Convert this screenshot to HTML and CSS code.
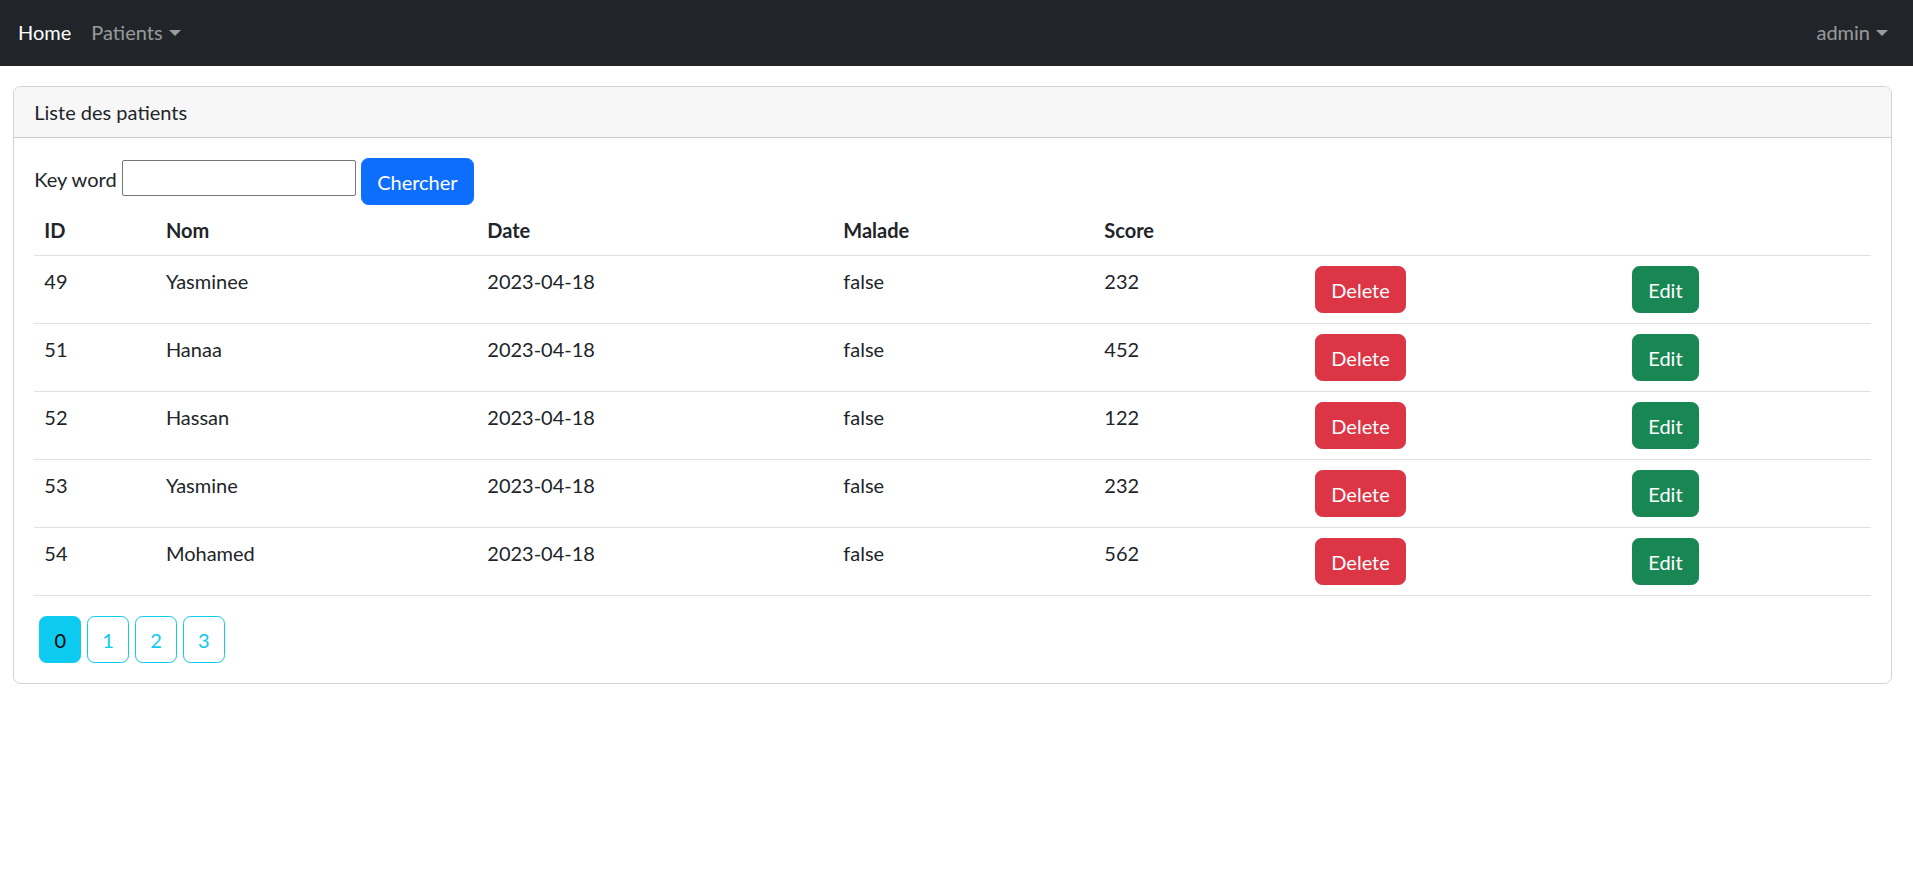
FILE: index.html
```html
<!DOCTYPE html>
<html lang="fr">
<head>
<meta charset="utf-8">
<title>Patients</title>
<link rel="stylesheet" href="styles.css">
</head>
<body>
<nav class="navbar">
  <ul class="nav-left">
    <li><a class="nav-link active" href="#">Home</a></li>
    <li><a class="nav-link dropdown-toggle" href="#">Patients</a></li>
  </ul>
  <ul class="nav-right">
    <li><a class="nav-link dropdown-toggle" href="#">admin</a></li>
  </ul>
</nav>
<main class="page">
  <section class="card">
    <div class="card-header">Liste des patients</div>
    <div class="card-body">
      <form class="search">
        <label for="kw" class="kw-label">Key word</label>
        <input id="kw" type="text" class="kw">
        <button type="button" class="btn btn-primary">Chercher</button>
      </form>
      <table class="table">
        <colgroup>
          <col class="c-id"><col class="c-nom"><col class="c-date"><col class="c-malade"><col class="c-score"><col class="c-del"><col class="c-edit">
        </colgroup>
        <thead>
          <tr><th>ID</th><th>Nom</th><th>Date</th><th>Malade</th><th>Score</th><th></th><th></th></tr>
        </thead>
        <tbody>
          <tr><td>49</td><td>Yasminee</td><td>2023-04-18</td><td>false</td><td>232</td><td><button class="btn btn-danger">Delete</button></td><td><button class="btn btn-success">Edit</button></td></tr>
          <tr><td>51</td><td>Hanaa</td><td>2023-04-18</td><td>false</td><td>452</td><td><button class="btn btn-danger">Delete</button></td><td><button class="btn btn-success">Edit</button></td></tr>
          <tr><td>52</td><td>Hassan</td><td>2023-04-18</td><td>false</td><td>122</td><td><button class="btn btn-danger">Delete</button></td><td><button class="btn btn-success">Edit</button></td></tr>
          <tr><td>53</td><td>Yasmine</td><td>2023-04-18</td><td>false</td><td>232</td><td><button class="btn btn-danger">Delete</button></td><td><button class="btn btn-success">Edit</button></td></tr>
          <tr><td>54</td><td>Mohamed</td><td>2023-04-18</td><td>false</td><td>562</td><td><button class="btn btn-danger">Delete</button></td><td><button class="btn btn-success">Edit</button></td></tr>
        </tbody>
      </table>
      <ul class="pages">
        <li><a class="btn page-btn current" href="#">0</a></li>
        <li><a class="btn page-btn" href="#">1</a></li>
        <li><a class="btn page-btn" href="#">2</a></li>
        <li><a class="btn page-btn" href="#">3</a></li>
      </ul>
    </div>
  </section>
</main>
</body>
</html>
```
FILE: styles.css
```css
* { box-sizing: border-box; }
html, body { margin: 0; padding: 0; }
body {
  font-family: Lato, "Noto Sans", "Liberation Sans", sans-serif;
  font-size: 20px;
  line-height: 30px;
  color: #212529;
  background: #fff;
}
a { text-decoration: none; }
ul { list-style: none; margin: 0; padding: 0; }

.navbar {
  height: 66px;
  background: #212529;
  display: flex;
  align-items: center;
  justify-content: space-between;
  padding: 0 15px 2px 8px;
}
.navbar ul { display: flex; }
.nav-link {
  display: block;
  padding: 10px 10px;
  color: rgba(255,255,255,.55);
}
.nav-link.active { color: #fff; }
.dropdown-toggle::after {
  content: "";
  display: inline-block;
  margin-left: 6px;
  vertical-align: 4px;
  border-top: 6px solid;
  border-left: 6px solid transparent;
  border-right: 6px solid transparent;
}

.page { padding: 20px 20.7px 0 13.3px; }
.card {
  border: 1.25px solid rgba(0,0,0,.175);
  border-radius: 7.5px;
  overflow: hidden;
}
.card-header {
  background: #f7f7f7;
  padding: 10px 20px;
  border-bottom: 1.25px solid rgba(0,0,0,.175);
}
.card-body { padding: 20px; }

.search {
  margin: 0;
  height: 47px;
  display: flex;
  align-items: flex-start;
}
.kw-label { margin-top: 6px; margin-right: 5px; }
.kw {
  width: 234px;
  height: 36.4px;
  margin: 2px 5.5px 0 0;
  border: 1.25px solid #767676;
  border-radius: 2px;
  font: inherit;
  padding: 1px 3px;
}

.btn {
  display: inline-block;
  font: inherit;
  line-height: 30px;
  padding: 7.5px 15px;
  border: 1.25px solid transparent;
  border-radius: 7.5px;
  color: #fff;
  cursor: pointer;
  text-align: center;
}
.btn-primary { background: #0d6efd; border-color: #0d6efd; }
.btn-danger { background: #dc3545; border-color: #dc3545; }
.btn-success { background: #198754; border-color: #198754; }

.table {
  width: 100%;
  table-layout: fixed;
  border-collapse: collapse;
  margin-bottom: 20px;
}
.c-id { width: 121.6px; }
.c-nom { width: 321.4px; }
.c-date { width: 356px; }
.c-malade { width: 261px; }
.c-score { width: 211px; }
.c-del { width: 317px; }
.c-edit { width: 249px; }
.table th, .table td {
  padding: 10px;
  text-align: left;
  vertical-align: top;
  border-bottom: 1.25px solid #dee2e6;
}
.table th { font-weight: 700; }

.pages { display: flex; gap: 5.5px; padding-left: 4.7px; }
.page-btn {
  width: 42.4px;
  padding: 7.5px 0;
  color: #0dcaf0;
  border-color: #0dcaf0;
  background: #fff;
}
.page-btn.current { background: #0dcaf0; color: #000; }
```
